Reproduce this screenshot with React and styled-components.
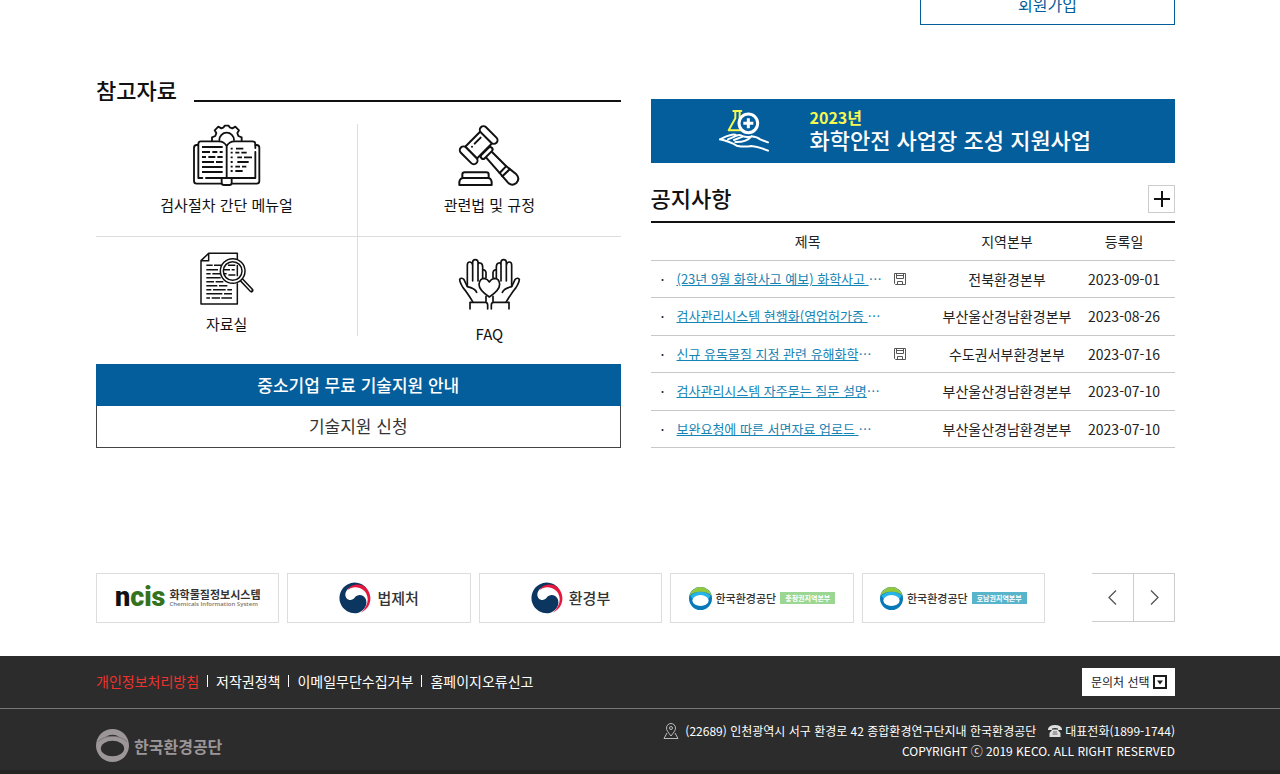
import React from 'react';
import styled, { createGlobalStyle } from 'styled-components';

const GlobalStyle = createGlobalStyle`
  *, *::before, *::after { box-sizing: border-box; }
  body {
    margin: 0;
    background: #fff;
    color: #222;
    font-family: "Noto Sans CJK KR", "Noto Sans", sans-serif;
    font-size: 14px;
    line-height: 20px;
  }
  a { color: inherit; text-decoration: none; }
  button, select { font: inherit; color: inherit; border-radius: 0; cursor: pointer; }
  h2, p, ul { margin: 0; padding: 0; }
  ul { list-style: none; }
  svg { display: block; flex: none; }
`;

const Page = styled.div`
  overflow: hidden;
`;

const Inner = styled.div`
  padding: 0 105px 0 96px;
`;

const JoinRow = styled.div`
  display: flex;
  justify-content: flex-end;
  margin-top: -15px;
`;

const JoinButton = styled.button`
  width: 255px;
  height: 40px;
  padding: 0 0 2px;
  border: 1px solid #045c98;
  background: #fff;
  color: #045c98;
  font-size: 16px;
`;

const Columns = styled.main`
  display: grid;
  grid-template-columns: 1fr 1fr;
  gap: 30px;
  padding-top: 50px;
`;

const Column = styled.section`
  display: flex;
  flex-direction: column;
  padding-top: ${(p) => (p.$inset ? '24px' : '0')};
`;

const Title = styled.h2`
  padding-bottom: 4px;
  color: #111;
  font-size: 22px;
  font-weight: 500;
  line-height: 28px;
`;

const RuledHeading = styled.div`
  display: flex;
  align-items: center;
  gap: 17px;
  &::after {
    content: '';
    flex: 1;
    height: 2px;
    margin-top: 20px;
    background: #111;
  }
`;

const Resources = styled.ul`
  display: grid;
  grid-template-columns: 1fr 1fr;
  margin-top: 17px;
`;

const Resource = styled.li`
  display: flex;
  flex-direction: column;
  border-right: ${(p) => (p.$left ? '1px solid #ddd' : '0')};
  border-bottom: ${(p) => (p.$top ? '1px solid #ddd' : '0')};
  height: ${(p) => (p.$top ? '113px' : '99px')};
  padding-top: ${(p) => (p.$top ? '0' : '15px')};
`;

const ResourceLink = styled.a`
  display: flex;
  flex-direction: column;
  align-items: center;
  gap: ${(p) => (p.$gap)}px;
  color: #111;
  font-size: 15px;
  line-height: 20px;
`;

const SupportLinks = styled.div`
  display: flex;
  flex-direction: column;
  margin-top: 28px;
`;

const SupportLink = styled.a`
  height: 42px;
  border: 1px solid ${(p) => (p.$filled ? '#045c98' : '#444')};
  border-top-width: ${(p) => (p.$filled ? '1px' : '0')};
  background: ${(p) => (p.$filled ? '#045e9b' : '#fff')};
  color: ${(p) => (p.$filled ? '#fff' : '#333')};
  font-size: 17px;
  font-weight: ${(p) => (p.$filled ? 500 : 400)};
  line-height: 40px;
  text-align: center;
`;

const Banner = styled.a`
  display: flex;
  align-items: center;
  gap: 40px;
  height: 64px;
  padding-left: 68px;
  background: #045e9b;
  color: #fff;
`;

const BannerText = styled.span`
  display: flex;
  flex-direction: column;
  padding-bottom: 4px;
  font-size: 22px;
  font-weight: 500;
  line-height: 24px;
`;

const BannerYear = styled.span`
  color: #f6f94f;
  font-size: 16px;
  font-weight: 700;
  line-height: 19px;
`;

const NoticeHeading = styled.div`
  display: flex;
  align-items: center;
  justify-content: space-between;
  height: 60px;
  padding-top: 14px;
  border-bottom: 2px solid #111;
`;

const MoreButton = styled.button`
  display: grid;
  place-items: center;
  width: 27px;
  height: 28px;
  padding: 0;
  border: 1px solid #ccc;
  background: #fff;
`;

const NoticeTable = styled.table`
  width: 100%;
  height: 225px;
  border-collapse: collapse;
  table-layout: fixed;
  font-size: 14px;
`;

const Cell = styled.td`
  padding: 0;
  border-bottom: 1px solid #c8c8c8;
  font-weight: 400;
  text-align: center;
  white-space: nowrap;
`;

const HeadCell = styled(Cell)`
  width: ${(p) => p.$width};
  height: 37px;
  padding-left: ${(p) => (p.$indent ? '24px' : '0')};
`;

const Notice = styled.div`
  display: flex;
  align-items: center;
  gap: 8px;
  padding-left: 10px;
`;

const Bullet = styled.span`
  width: 8px;
  text-align: left;
`;

const NoticeText = styled.span`
  display: flex;
  width: 209px;
  color: #1484b4;
  font-size: 13px;
`;

const NoticeLink = styled.a`
  white-space: pre;
  text-decoration: underline;
`;

const Partners = styled.section`
  display: flex;
  gap: 47px;
  margin-top: 125px;
  padding-bottom: 33px;
`;

const PartnerList = styled.ul`
  display: flex;
  flex: 1;
  gap: 8px;
`;

const PartnerItem = styled.li`
  flex: 1;
`;

const Partner = styled.a`
  display: flex;
  align-items: center;
  justify-content: center;
  gap: ${(p) => p.$gap}px;
  height: 50px;
  border: 1px solid #ddd;
  color: #333;
  font-size: 15px;
  font-weight: 500;
  white-space: nowrap;
`;

const NcisMark = styled.span`
  padding-bottom: 3px;
  color: #34721c;
  font-family: Roboto, sans-serif;
  font-size: 27px;
  font-weight: 900;
  line-height: 26px;
`;

const NcisInitial = styled.span`
  color: #111;
`;

const NcisName = styled.span`
  display: flex;
  flex-direction: column;
  font-size: 11px;
  font-weight: 700;
  line-height: 12px;
`;

const NcisSub = styled.span`
  color: #777;
  font-family: "Open Sans", sans-serif;
  font-size: 6px;
  font-weight: 600;
  line-height: 8px;
`;

const KecoName = styled.span`
  font-size: 11px;
`;

const Region = styled.span`
  padding: 0 5px;
  background: ${(p) => p.$color};
  color: #fff;
  font-size: 7px;
  font-weight: 700;
  line-height: 12px;
`;

const Arrows = styled.div`
  display: flex;
  height: 49px;
`;

const ArrowButton = styled.button`
  display: grid;
  place-items: center;
  width: ${(p) => (p.$first ? '41px' : '42px')};
  padding: 0;
  border: 1px solid #ccc;
  border-left-width: ${(p) => (p.$first ? '0' : '1px')};
  border-right-width: ${(p) => (p.$first ? '0' : '1px')};
  background: #fff;
`;

const Footer = styled.footer`
  background: #2c2c2c;
  border-bottom: 4px solid #252324;
  color: #fff;
`;

const FooterTop = styled(Inner)`
  display: flex;
  align-items: center;
  justify-content: space-between;
  height: 53px;
  border-bottom: 1px solid #777;
`;

const FooterLinks = styled.ul`
  display: flex;
  padding-bottom: 2px;
`;

const FooterItem = styled.li`
  display: flex;
  align-items: center;
  color: ${(p) => (p.$strong ? '#f0322d' : '#fff')};
  &:not(:first-child)::before {
    content: '';
    width: 1px;
    height: 12px;
    margin: 0 8px;
    background: #fff;
  }
`;

const ContactPicker = styled.label`
  display: grid;
  grid-template-columns: 1fr 22px;
  align-items: center;
  width: 93px;
  height: 28px;
  background: #fff;
  svg { grid-area: 1 / 2; pointer-events: none; }
`;

const ContactSelect = styled.select`
  grid-area: 1 / 1 / 2 / 3;
  width: 100%;
  height: 28px;
  padding: 0 0 0 9px;
  border: 0;
  background: transparent;
  color: #222;
  font-size: 12px;
  appearance: none;
`;

const FooterBottom = styled(Inner)`
  display: flex;
  justify-content: space-between;
  padding-top: 12px;
  padding-bottom: 8px;
`;

const FooterLogo = styled.a`
  display: flex;
  align-items: center;
  gap: 5px;
  padding-top: 8px;
  color: #9c9698;
  font-size: 16px;
  font-weight: 700;
`;

const Address = styled.address`
  display: flex;
  flex-direction: column;
  align-items: flex-end;
  font-size: 12px;
  font-style: normal;
  line-height: 20px;
`;

const AddressLine = styled.p`
  display: flex;
  align-items: center;
  gap: 12px;
`;

const AddressPart = styled.span`
  display: flex;
  align-items: center;
  gap: ${(p) => p.$gap}px;
`;

const ink = { fill: 'none', stroke: '#111', strokeLinecap: 'round', strokeLinejoin: 'round' };

const ManualIcon = () => (
  <svg width="69" height="63" viewBox="336 162 207 189" aria-hidden="true" {...ink} strokeWidth="5.5">
    <path d="M396 212V202L406 198 409 189 404 181 415 170 424 175 431 172 434 167H446L449 172 457 175 466 170 477 181 472 189 475 198 485 202V212" />
    <path d="M418 210a22 22 0 0 1 44 0" />
    <path d="M440 322V228Q432 214 416 214H362Q355 214 355 222V324H367M378 324H526V246M440 228Q448 214 464 214H518Q526 214 526 222V234" />
    <path d="M354 225H350Q342 225 342 233V333Q342 341 350 341H424M526 225H530Q538 225 538 233V333Q538 341 530 341H456" />
    <path d="M425 326V338Q425 345 432 345H448Q455 345 455 338V326" />
    <path strokeLinecap="butt" d="M366 231H428M366 246H390M397 246H412M419 246H428M366 261H378M385 261H406M412 261H428M366 276H402M408 276H428M366 291H428M366 306H428M452 236H458M468 236H490M452 248H458M466 248H478M484 248H500M452 262H458M472 262H486M492 262H516M452 276H458M472 276H506M452 290H458M466 290H480M486 290H499M452 303H458M466 303H488" />
  </svg>
);

const GavelIcon = () => (
  <svg width="63" height="63" viewBox="354 162 189 189" aria-hidden="true" {...ink} strokeWidth="6">
    <path d="M438 262L478 308 504 338Q516 350 529 339 541 326 529 313L498 288 456 246" />
    <path d="M479 309L498 289M487 319L509 298" />
    <rect x="418" y="242" width="44" height="14" rx="7" transform="rotate(-45 440 249)" fill="#fff" />
    <rect x="384" y="200" width="64" height="50" transform="rotate(-45 416 225)" fill="#fff" />
    <rect x="413" y="184" width="66" height="22" rx="11" transform="rotate(45 446 195)" fill="#fff" />
    <rect x="353" y="245" width="66" height="22" rx="11" transform="rotate(45 386 256)" fill="#fff" />
    <path d="M404 221L422 203M396 230h.1" />
    <path d="M367 322V314Q367 307 374 307H439Q446 307 446 314V322M358 345V336Q360 324 370 324H444Q453 324 455 336V345Z" />
  </svg>
);

const ArchiveIcon = () => (
  <svg width="54" height="54" viewBox="358 547 162 162" aria-hidden="true" {...ink} strokeWidth="4.5">
    <path d="M470 568V551H384L361 573V703H470V642M384 551V573H361" />
    <path strokeLinecap="butt" d="M377 587H396M400 587H422M377 600H412M377 612H390M395 612H418M377 624H420M377 636H400M405 636H428M377 648H410M415 648H440M377 660H392M397 660H435M440 660H454M377 672H425M430 672H454M377 685H388M393 685H418M422 685H454" />
    <path d="M482 630L512 662" strokeWidth="13" />
    <path d="M484 632L511 661" strokeWidth="4" stroke="#fff" />
    <circle cx="456" cy="604" r="37" fill="#fff" />
    <circle cx="456" cy="604" r="28" />
    <path strokeLinecap="butt" d="M442 587H464M430 600H448M453 600H462M430 612H438M443 616H464M470 586V620" />
  </svg>
);

const Hand = () => (
  <>
    <path d="M389 714V694H436Q442 695 442 702V714" />
    <path d="M397 692Q380 664 368 650 358 634 358 625 364 618 371 626L381 647Q404 652 409 664" />
    <path d="M381 646V582Q381 573 388 573 395 573 397 582M397 630V574Q397 566 405 566 413 566 413 574V630M413 582Q414 574 420 576 427 578 427 588V622M427 598Q434 594 437 604V620M437 676V692" />
  </>
);

const CareIcon = () => (
  <svg width="63" height="60" viewBox="353 543 189 180" aria-hidden="true" {...ink} strokeWidth="5">
    <Hand />
    <g transform="matrix(-1 0 0 1 895 0)"><Hand /></g>
    <path fill="#fff" d="M447 678Q416 658 416 640 418 622 432 622 442 624 447 633 452 624 462 622 477 622 478 640 478 658 447 678Z" />
  </svg>
);

const SafetyIcon = () => (
  <svg width="51" height="44" viewBox="235 58 153 132" aria-hidden="true" {...ink} stroke="#fff" strokeWidth="6">
    <path stroke="#f6f94f" d="M278 64H302M284 65V86L264 122H314M297 65V88" />
    <circle cx="323" cy="101" r="28" strokeWidth="9" fill="#045e9b" />
    <path d="M323 86V116M308 101H338" strokeWidth="9" strokeLinecap="butt" />
    <path d="M238 149Q256 139 270 136 282 132 288 138 298 133 306 140 320 144 332 140 350 142 360 150L382 158M238 149Q268 156 288 168 310 173 332 169 352 170 382 183M262 149L288 138M280 151L306 141M284 157Q318 158 332 140" />
  </svg>
);

const PlusIcon = () => (
  <svg width="16" height="16" viewBox="0 0 16 16" aria-hidden="true" stroke="#111" strokeWidth="2">
    <path d="M8 0V16M0 8H16" />
  </svg>
);

const DiskIcon = () => (
  <svg width="12" height="12" viewBox="0 0 12 12" aria-label="첨부파일" fill="none" stroke="#555">
    <path d="M.5.5H11.5V11.5H1.5L.5 10.5ZM2.500.5V5.500H9.500V.5M3.500 11.500V8.500H8.500V11.500M2.500 2.500H9.500" />
  </svg>
);

const Taegeuk = () => (
  <svg width="32" height="32" viewBox="-48 -48 96 96" aria-hidden="true">
    <path fill="#0b3660" d="M36-28A46 46 0 1 0 8 45C30 38 40 16 31 1 22-13 6-10 0-2-10 12-30 6-29-12-26-36 10-44 30-30Z" />
    <path fill="#e6173f" d="M-22-23C-14-43 20-47 36-28 53-6 50 28 18 44 42 22 43-4 29-20 14-36-10-36-22-23Z" />
  </svg>
);

const KecoMark = ({ size, mono }) => (
  <svg width={size} height={size} viewBox="0 0 34 34" aria-hidden="true">
    <circle cx="17" cy="17" r="17" fill={mono ? '#9c9698' : '#0878b8'} />
    {!mono && <path fill="#27b5e8" d="M2 13Q9 7 17 7 25 7 32 13L27 20H7Z" />}
    {!mono && <path fill="#92c83e" d="M.5 13A17 17 0 0 1 33.500 13Q27 7 17 7 7 7 .5 13Z" />}
    <ellipse cx="17" cy="20" rx="12" ry="8" fill={mono ? '#2c2c2c' : '#fff'} />
    {mono && <path fill="#2c2c2c" d="M10 8Q17 4 24 8 17 7 10 8Z" />}
    {mono && <path fill="none" stroke="#716c6e" strokeWidth=".8" d="M2 13Q8 7.500 17 7.500 26 7.500 32 13" />}
  </svg>
);

const Chevron = ({ d }) => (
  <svg width="9" height="15" viewBox="0 0 9 15" aria-hidden="true" fill="none" stroke="#555" strokeWidth="1.300">
    <path d={d} />
  </svg>
);

const SelectArrow = () => (
  <svg width="14" height="14" viewBox="0 0 14 14" aria-hidden="true">
    <rect x="1" y="1" width="12" height="12" fill="#fff" stroke="#1c1c1c" strokeWidth="2" />
    <path fill="#1c1c1c" d="M4 5.500H10L7 9.500Z" />
  </svg>
);

const PinIcon = () => (
  <svg width="16" height="16" viewBox="0 0 16 16" aria-hidden="true" fill="none" stroke="#bbb">
    <path d="M8 13C5 9 3.500 7.500 3.500 5A4.500 4.500 0 0 1 12.500 5C12.500 7.500 11 9 8 13ZM4 10 1 15.500H15L12 10" />
    <circle cx="8" cy="5" r="1.500" />
  </svg>
);

const PhoneIcon = () => (
  <svg width="14" height="12" viewBox="0 0 14 12" aria-hidden="true">
    <path fill="#ddd" d="M0 4Q1 0 7 0 13 0 14 4V5H10V3.500Q7 2.500 4 3.500V5H0ZM4.500 4.500H9.500L12.500 8V12H1.500V8Z" />
    <path fill="none" stroke="#666" d="M5 7H9M4.500 9H9.500" />
  </svg>
);

const resources = [
  { label: '검사절차 간단 메뉴얼', Icon: ManualIcon, gap: 8 },
  { label: '관련법 및 규정', Icon: GavelIcon, gap: 8 },
  { label: '자료실', Icon: ArchiveIcon, gap: 8 },
  { label: 'FAQ', Icon: CareIcon, gap: 12 },
];

const notices = [
  { title: '(23년 9월 화학사고 예보) 화학사고 ', office: '전북환경본부', date: '2023-09-01', file: true },
  { title: '검사관리시스템 현행화(영업허가증 ', office: '부산울산경남환경본부', date: '2023-08-26' },
  { title: '신규 유독물질 지정 관련 유해화학', office: '수도권서부환경본부', date: '2023-07-16', file: true },
  { title: '검사관리시스템 자주묻는 질문 설명', office: '부산울산경남환경본부', date: '2023-07-10' },
  { title: '보완요청에 따른 서면자료 업로드 ', office: '부산울산경남환경본부', date: '2023-07-10' },
];

const policies = ['개인정보처리방침', '저작권정책', '이메일무단수집거부', '홈페이지오류신고'];

export default function App() {
  return (
    <Page lang="ko">
      <GlobalStyle />
      <Inner>
        <JoinRow>
          <JoinButton type="button">회원가입</JoinButton>
        </JoinRow>
        <Columns>
          <Column>
            <RuledHeading><Title>참고자료</Title></RuledHeading>
            <Resources>
              {resources.map(({ label, Icon, gap }, i) => (
                <Resource key={label} $left={i % 2 === 0} $top={i < 2}>
                  <ResourceLink href="#" $gap={gap}><Icon />{label}</ResourceLink>
                </Resource>
              ))}
            </Resources>
            <SupportLinks>
              <SupportLink href="#" $filled>중소기업 무료 기술지원 안내</SupportLink>
              <SupportLink href="#">기술지원 신청</SupportLink>
            </SupportLinks>
          </Column>
          <Column $inset>
            <Banner href="#">
              <SafetyIcon />
              <BannerText>
                <BannerYear>2023년</BannerYear>
                화학안전 사업장 조성 지원사업
              </BannerText>
            </Banner>
            <NoticeHeading>
              <Title>공지사항</Title>
              <MoreButton type="button" aria-label="공지사항 더보기"><PlusIcon /></MoreButton>
            </NoticeHeading>
            <NoticeTable>
              <thead>
                <tr>
                  <HeadCell as="th" scope="col" $width="auto" $indent>제목</HeadCell>
                  <HeadCell as="th" scope="col" $width="132px">지역본부</HeadCell>
                  <HeadCell as="th" scope="col" $width="102px">등록일</HeadCell>
                </tr>
              </thead>
              <tbody>
                {notices.map((n, i) => (
                  <tr key={i}>
                    <Cell>
                      <Notice>
                        <Bullet>·</Bullet>
                        <NoticeText><NoticeLink href="#">{n.title}</NoticeLink>⋯</NoticeText>
                        {n.file && <DiskIcon />}
                      </Notice>
                    </Cell>
                    <Cell>{n.office}</Cell>
                    <Cell>{n.date}</Cell>
                  </tr>
                ))}
              </tbody>
            </NoticeTable>
          </Column>
        </Columns>
        <Partners>
          <PartnerList>
            <PartnerItem>
              <Partner href="#" $gap={4}>
                <NcisMark><NcisInitial>n</NcisInitial>cis</NcisMark>
                <NcisName>화학물질정보시스템<NcisSub>Chemicals Information System</NcisSub></NcisName>
              </Partner>
            </PartnerItem>
            <PartnerItem><Partner href="#" $gap={6}><Taegeuk />법제처</Partner></PartnerItem>
            <PartnerItem><Partner href="#" $gap={6}><Taegeuk />환경부</Partner></PartnerItem>
            <PartnerItem>
              <Partner href="#" $gap={4}>
                <KecoMark size={23} /><KecoName>한국환경공단</KecoName><Region $color="#9bd793">충청권지역본부</Region>
              </Partner>
            </PartnerItem>
            <PartnerItem>
              <Partner href="#" $gap={4}>
                <KecoMark size={23} /><KecoName>한국환경공단</KecoName><Region $color="#58b4cb">호남권지역본부</Region>
              </Partner>
            </PartnerItem>
          </PartnerList>
          <Arrows>
            <ArrowButton type="button" aria-label="이전" $first><Chevron d="M8 .5 1 7.500 8 14.500" /></ArrowButton>
            <ArrowButton type="button" aria-label="다음"><Chevron d="M1 .5 8 7.500 1 14.500" /></ArrowButton>
          </Arrows>
        </Partners>
      </Inner>
      <Footer>
        <FooterTop>
          <FooterLinks>
            {policies.map((label, i) => (
              <FooterItem key={label} $strong={i === 0}><a href="#">{label}</a></FooterItem>
            ))}
          </FooterLinks>
          <ContactPicker>
            <ContactSelect aria-label="문의처 선택" defaultValue="none">
              <option value="none">문의처 선택</option>
            </ContactSelect>
            <SelectArrow />
          </ContactPicker>
        </FooterTop>
        <FooterBottom>
          <FooterLogo href="#"><KecoMark size={33} mono />한국환경공단</FooterLogo>
          <Address>
            <AddressLine>
              <AddressPart $gap={6}><PinIcon />(22689) 인천광역시 서구 환경로 42 종합환경연구단지내 한국환경공단</AddressPart>
              <AddressPart $gap={3}><PhoneIcon />대표전화(1899-1744)</AddressPart>
            </AddressLine>
            <p>COPYRIGHT ⓒ 2019 KECO. ALL RIGHT RESERVED</p>
          </Address>
        </FooterBottom>
      </Footer>
    </Page>
  );
}
